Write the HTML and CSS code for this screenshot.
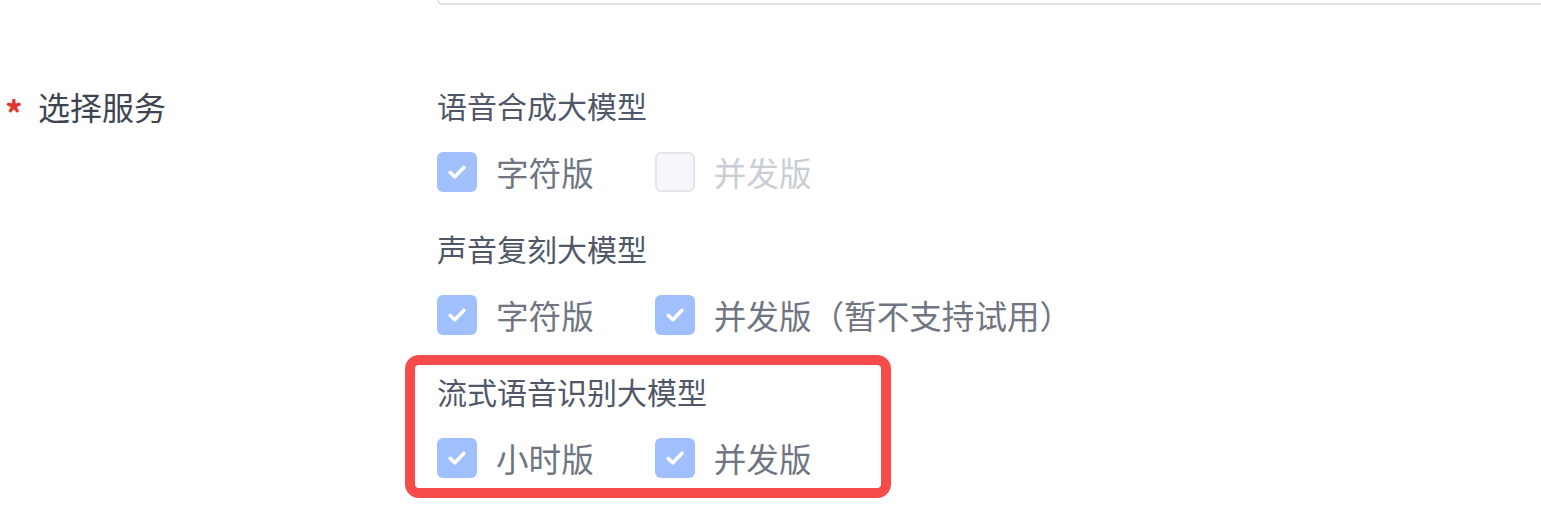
FILE: index.html
```html
<!DOCTYPE html>
<html lang="zh-CN">
<head>
<meta charset="utf-8">
<link rel="stylesheet" href="styles.css">
</head>
<body>
<div class="input-tail"></div>
<div class="form-item">
  <div class="form-label"><span class="req">*</span><span class="label-text">选择服务</span></div>
  <div class="form-content">
    <div class="group">
      <div class="group-title">语音合成大模型</div>
      <div class="options">
        <label class="cb checked"><span class="box"><svg viewBox="0 0 18 14" width="18" height="14"><path d="M2.2 7.4 L6.8 11.8 L15.8 2.4" fill="none" stroke="#fff" stroke-width="3.6" stroke-linecap="round" stroke-linejoin="round"/></svg></span><span class="cb-text">字符版</span></label>
        <label class="cb off"><span class="box"></span><span class="cb-text">并发版</span></label>
      </div>
    </div>
    <div class="group">
      <div class="group-title">声音复刻大模型</div>
      <div class="options">
        <label class="cb checked"><span class="box"><svg viewBox="0 0 18 14" width="18" height="14"><path d="M2.2 7.4 L6.8 11.8 L15.8 2.4" fill="none" stroke="#fff" stroke-width="3.6" stroke-linecap="round" stroke-linejoin="round"/></svg></span><span class="cb-text">字符版</span></label>
        <label class="cb checked"><span class="box"><svg viewBox="0 0 18 14" width="18" height="14"><path d="M2.2 7.4 L6.8 11.8 L15.8 2.4" fill="none" stroke="#fff" stroke-width="3.6" stroke-linecap="round" stroke-linejoin="round"/></svg></span><span class="cb-text">并发版（暂不支持试用）</span></label>
      </div>
    </div>
    <div class="group highlighted">
      <div class="group-title">流式语音识别大模型</div>
      <div class="options">
        <label class="cb checked"><span class="box"><svg viewBox="0 0 18 14" width="18" height="14"><path d="M2.2 7.4 L6.8 11.8 L15.8 2.4" fill="none" stroke="#fff" stroke-width="3.6" stroke-linecap="round" stroke-linejoin="round"/></svg></span><span class="cb-text">小时版</span></label>
        <label class="cb checked"><span class="box"><svg viewBox="0 0 18 14" width="18" height="14"><path d="M2.2 7.4 L6.8 11.8 L15.8 2.4" fill="none" stroke="#fff" stroke-width="3.6" stroke-linecap="round" stroke-linejoin="round"/></svg></span><span class="cb-text">并发版</span></label>
      </div>
    </div>
  </div>
</div>
</body>
</html>
```

FILE: styles.css
```css
*, *::before, *::after { box-sizing: border-box; }
html, body { margin: 0; padding: 0; background: #fff; }
body {
  width: 1541px;
  height: 520px;
  overflow: hidden;
  font-family: "Noto Sans CJK SC", "Noto Sans", sans-serif;
}
.input-tail {
  margin-left: 437px;
  margin-right: -20px;
  height: 5px;
  border: 2px solid #dfe3e9;
  border-top: none;
  border-radius: 0 0 0 9px;
}
.form-item {
  display: flex;
  margin-top: 83px;
}
.form-label {
  width: 437px;
  flex: none;
  display: flex;
  height: 40px;
  padding-left: 5px;
}
.req {
  display: block;
  width: 33px;
  height: 40px;
  padding-top: 8px;
  color: #e0362f;
  font-size: 35px;
  font-weight: 700;
  line-height: 32px;
}
.label-text {
  font-size: 32px;
  line-height: 36px;
  color: #3e4451;
}
.form-content {
  display: flex;
  flex-direction: column;
  gap: 39px;
}
.group {
  display: flex;
  flex-direction: column;
  gap: 24px;
}
.group-title {
  font-size: 30px;
  line-height: 35px;
  height: 40px;
  color: #4f5768;
}
.options {
  display: flex;
  gap: 61px;
  height: 40px;
}
.cb {
  display: flex;
  align-items: center;
  gap: 19px;
  height: 40px;
}
.box {
  width: 40px;
  height: 40px;
  border-radius: 6px;
  display: flex;
  align-items: center;
  justify-content: center;
  flex: none;
}
.cb.checked .box {
  background: #9fbffd;
}
.cb.off .box {
  background: #f5f7fa;
  border: 2px solid #e2e6ec;
}
.cb-text {
  font-size: 32.6px;
  line-height: 40px;
  color: #6f7581;
}
.cb.off .cb-text {
  color: #c9cdd4;
}
.highlighted {
  position: relative;
}
.highlighted::after {
  content: "";
  position: absolute;
  left: -32px;
  top: -19px;
  width: 486px;
  height: 143px;
  border: 10px solid #f54b49;
  border-radius: 14px;
  pointer-events: none;
}
```
